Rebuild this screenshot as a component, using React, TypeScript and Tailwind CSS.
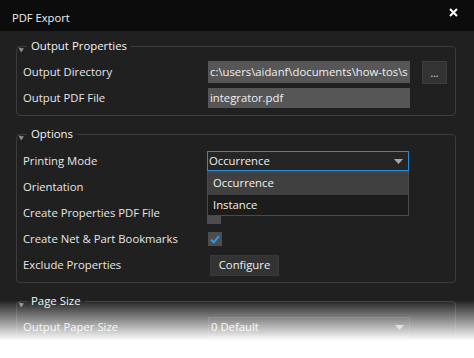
import React from "react"

const FONT = "font-['Open_Sans','Noto_Sans',sans-serif]"

function Group({ title, children, className = "" }: { title: string; children: React.ReactNode; className?: string }) {
  return (
    <fieldset className={`border border-[#3c3c3c] rounded-[4px] px-[6px] min-w-0 ${className}`}>
      <legend className="relative ml-[4px] px-[4px] text-[11.4px] leading-[18px] text-[#f2f2f2]">
        {/* expander wedge at the corner */}
        <svg className="absolute left-[-9px] top-[10px]" width="7" height="6" viewBox="0 0 7 6">
          <path d="M0.5 0.5 L6 1.5 L3 5.5 Z" fill="#8c8c8c" />
        </svg>
        {title}
      </legend>
      {children}
    </fieldset>
  )
}

function Row({ label, children }: { label: string; children?: React.ReactNode }) {
  return (
    <div className="grid grid-cols-[185px_1fr] items-center h-[26px]">
      <span className="text-[11.3px] text-[#e6e6e6]">{label}</span>
      <div className="flex items-center">{children}</div>
    </div>
  )
}

function Arrow() {
  return (
    <svg width="9" height="5" viewBox="0 0 9 5">
      <path d="M0 0 H9 L4.5 5 Z" fill="#a8a8a8" />
    </svg>
  )
}

function Check({ checked }: { checked?: boolean }) {
  return (
    <div className="w-[14px] h-[14px] bg-[#4d4d4d] flex items-center justify-center">
      {checked && (
        <svg width="10" height="9" viewBox="0 0 10 9">
          <path d="M1 4.5 L3.8 7.3 L9 1.2" fill="none" stroke="#2b9be6" strokeWidth="2" />
        </svg>
      )}
    </div>
  )
}

export default function App() {
  return (
    <div className={`relative w-full h-[358px] overflow-hidden bg-[#202020] ${FONT}`}>
      {/* Title bar */}
      <div className="h-[31px] bg-[#0c0c0c] flex items-center justify-between pl-[12px] pr-[16px]">
        <span className="text-[11.2px] text-[#f0f0f0] pt-[6px]">PDF Export</span>
        <svg className="-mt-[7px]" width="9" height="9" viewBox="0 0 9 9">
          <path d="M1 1 L8 8 M8 1 L1 8" stroke="#ffffff" strokeWidth="2" />
        </svg>
      </div>

      <div className="px-[16px] pr-[18px] pt-[6px] flex flex-col">
        <Group title="Output Properties" className="pt-[4px] pb-[4px]">
          <Row label="Output Directory">
            <div className="w-[202px] h-[22px] bg-[#565656] px-[2px] text-[11.3px] leading-[22px] text-[#f0f0f0] overflow-hidden whitespace-nowrap">
              c:\users\aidanf\documents\how-tos\s
            </div>
            <button className="ml-[12px] w-[25px] h-[23px] bg-[#333333] border border-[#3d3d3d] text-[10px] text-[#e0e0e0] leading-none pt-[2px]">
              ...
            </button>
          </Row>
          <Row label="Output PDF File">
            <div className="w-[202px] h-[20px] bg-[#565656] px-[2px] text-[11.3px] leading-[20px] text-[#f0f0f0]">
              integrator.pdf
            </div>
          </Row>
        </Group>

        <Group title="Options" className="mt-[9px] pt-[5px] pb-[4px]">
          <Row label="Printing Mode">
            <div className="relative w-[202px] -ml-[1px]">
              <div className="h-[20px] border border-[#2a8ad4] bg-[#252525] flex items-center justify-between pl-[1px] pr-[5px] text-[11.3px] text-[#f0f0f0]">
                <span>Occurrence</span>
                <Arrow />
              </div>
              <div className="absolute left-0 top-[20px] w-[202px] z-10 border border-[#4a4a4a] bg-[#1c1c1c] text-[11.3px] text-[#f0f0f0]">
                <div className="h-[23px] bg-[#404040] flex items-center pl-[5px]">Occurrence</div>
                <div className="h-[20px] flex items-center pl-[5px]">Instance</div>
              </div>
            </div>
          </Row>
          <Row label="Orientation" />
          <Row label="Create Properties PDF File">
            <div className="-ml-[1px] mt-[8px]">
              <Check />
            </div>
          </Row>
          <Row label="Create Net &amp; Part Bookmarks">
            <Check checked />
          </Row>
          <Row label="Exclude Properties">
            <button className="ml-[2px] w-[69px] h-[21px] bg-[#333333] border border-[#383838] text-[11.3px] text-[#f0f0f0]">
              Configure
            </button>
          </Row>
        </Group>

        <Group title="Page Size" className="mt-[9px] pt-[4px] pb-[20px]">
          <Row label="Output Paper Size">
            <div className="w-[202px] h-[20px] border border-[#3c3c3c] bg-[#252525] flex items-center justify-between pl-[2px] pr-[5px] text-[11.3px] text-[#f0f0f0]">
              <span>0 Default</span>
              <Arrow />
            </div>
          </Row>
        </Group>
      </div>

      {/* fade-out at the bottom */}
      <div className="absolute left-0 right-0 bottom-0 h-[58px] bg-linear-to-b from-white/0 via-white via-70% to-white" />
    </div>
  )
}
